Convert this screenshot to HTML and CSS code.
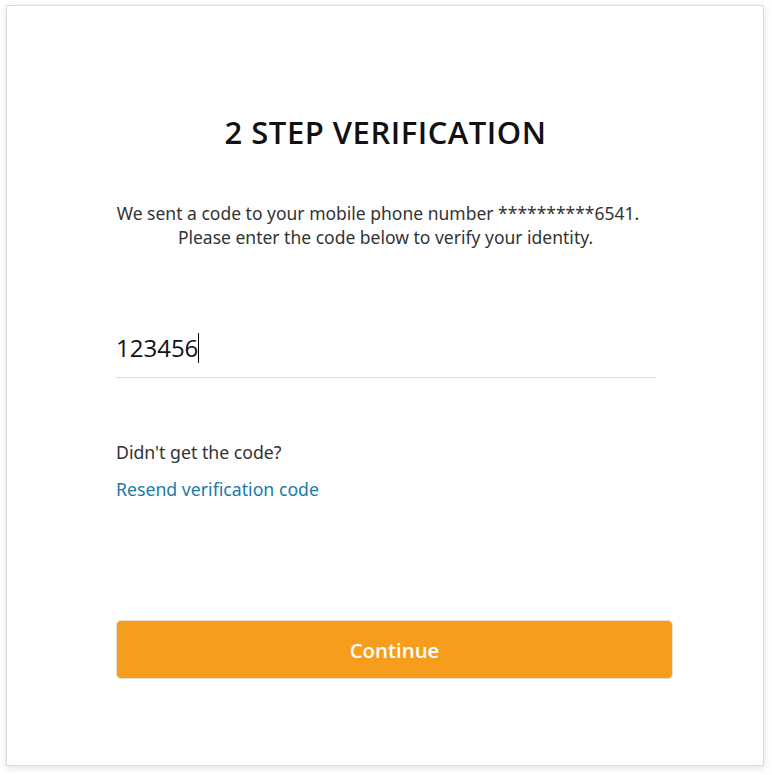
FILE: index.html
```html
<!DOCTYPE html>
<html lang="en">
<head>
<meta charset="utf-8">
<title>2 Step Verification</title>
<link rel="stylesheet" href="styles.css">
</head>
<body>
<div class="card">
  <h1 class="title">2 STEP VERIFICATION</h1>
  <p class="intro"><span class="first-line">We sent a code to your mobile phone number **********6541.</span><br>Please enter the code below to verify your identity.</p>
  <div class="field">
    <span class="code">123456</span><span class="caret"></span>
  </div>
  <p class="question">Didn't get the code?</p>
  <a class="resend" href="#">Resend verification code</a>
  <button class="continue" type="button">Continue</button>
</div>
</body>
</html>
```
FILE: styles.css
```css
html, body {
  margin: 0;
  padding: 0;
  background: #ffffff;
}
body {
  padding: 5px 8px 9px 6px;
  font-family: "Noto Sans", "Open Sans", sans-serif;
  color: #333333;
}
.card {
  box-sizing: border-box;
  width: 758px;
  height: 761px;
  border: 1px solid #dcdcdc;
  box-shadow: 0 2px 8px rgba(0, 0, 0, 0.12);
  background: #ffffff;
  padding: 0 108px 0 109px;
  display: flex;
  flex-direction: column;
}
.title {
  margin: 106px 0 0;
  text-align: center;
  font-family: "Open Sans", sans-serif;
  font-weight: 600;
  font-size: 31px;
  letter-spacing: 0.5px;
  line-height: 40px;
  color: #111111;
}
.intro {
  margin: 49px -20px 0;
  text-align: center;
  font-size: 17.5px;
  line-height: 24px;
  color: #333333;
  white-space: nowrap;
}
.first-line {
  padding-right: 15px;
}
.field {
  margin-top: 78px;
  flex-shrink: 0;
  width: 540px;
  height: 46px;
  border-bottom: 1px solid #dddddd;
  display: flex;
  align-items: flex-start;
  padding-top: 4px;
  box-sizing: content-box;
}
.code {
  font-family: "Open Sans", sans-serif;
  font-size: 24px;
  line-height: 34px;
  color: #111111;
}
.caret {
  width: 1px;
  height: 30px;
  margin-top: 2px;
  background: #000000;
}
.question {
  margin: 62px 0 0;
  font-size: 17.7px;
  line-height: 24px;
  color: #333333;
}
.resend {
  margin-top: 13px;
  font-size: 17.7px;
  line-height: 24px;
  color: #1a7ba8;
  text-decoration: none;
  align-self: flex-start;
}
.continue {
  margin-top: 119px;
  flex-shrink: 0;
  width: 557px;
  height: 59px;
  border: 1px solid #e8e0d4;
  border-radius: 5px;
  background: #f79d1e;
  color: #ffffff;
  font-family: "Open Sans", sans-serif;
  font-weight: 600;
  font-size: 20.4px;
  cursor: pointer;
}
```
